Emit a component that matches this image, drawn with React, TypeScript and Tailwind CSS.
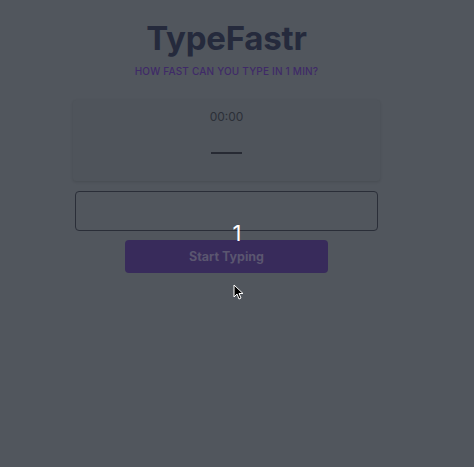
import React from "react";

export default function App() {
  return (
    <div
      className="relative w-[474px] h-[467px] overflow-hidden bg-[#51565d]"
      style={{ fontFamily: "Inter, 'Noto Sans', sans-serif" }}
    >
      <div className="w-[453px] flex flex-col items-center pt-[19px]">
        <h1 className="text-[33px] leading-[39px] font-bold text-[#252a3c] tracking-[-0.2px]">
          TypeFastr
        </h1>
        <p className="mt-[6px] text-[10px] leading-[14px] font-medium uppercase tracking-[0.2px] text-[#3f2a68]">
          How fast can you type in 1 min?
        </p>
        <div className="mt-[22px] w-[307px] h-[81px] rounded-[3px] bg-[#4f545b] shadow-[0_1px_3px_rgba(0,0,0,0.12)] flex flex-col items-center pt-[9px]">
          <span className="text-[12px] leading-[16px] text-[#2c3038]">00:00</span>
          <div className="mt-[27px] w-[31px] h-[2px] bg-[#272a33]" />
        </div>
        <div className="mt-[10px] w-[303px] h-[40px] rounded-[4px] border-[1.5px] border-[#2a2e38]" />
        <button className="mt-[9px] w-[203px] h-[33px] pt-[2px] rounded-[4px] bg-[#382b5b] text-[12.5px] font-bold text-[#5b5670]">
          Start Typing
        </button>
      </div>
      <div className="absolute left-0 right-0 top-[220px] flex justify-center">
        <span className="text-[22px] leading-[26px] text-white">1</span>
      </div>
      <svg
        className="absolute left-[233px] top-[284px]"
        width="11"
        height="16"
        viewBox="0 0 11 16"
      >
        <path
          d="M1 1 L1 13 L4 10 L6 15 L8 14 L6 9.5 L10 9.5 Z"
          fill="#000"
          stroke="#fff"
          strokeWidth="1"
          strokeLinejoin="round"
        />
      </svg>
    </div>
  );
}
